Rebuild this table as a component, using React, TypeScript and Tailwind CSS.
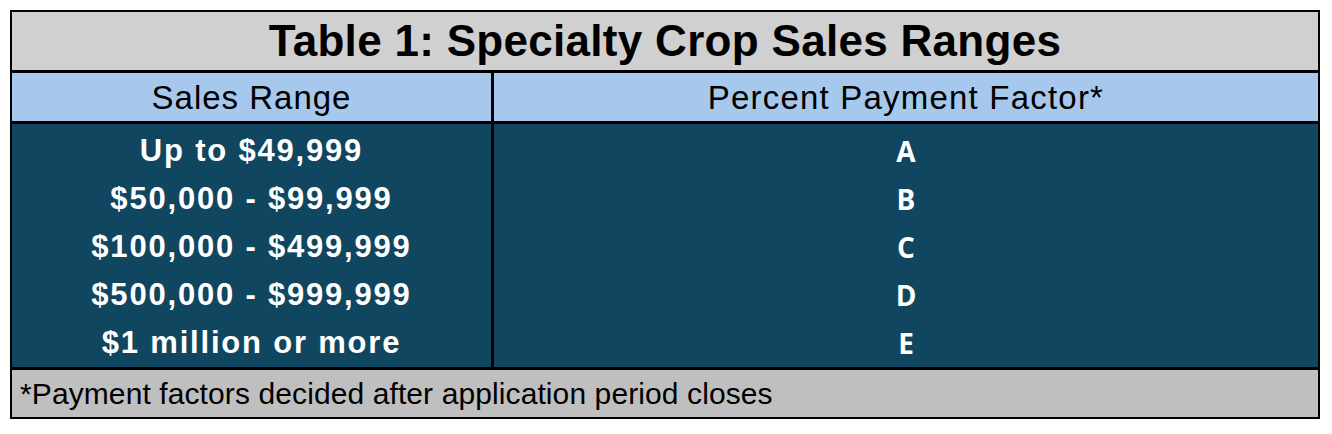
import React from "react";

const rows: [string, string][] = [
  ["Up to $49,999", "A"],
  ["$50,000 - $99,999", "B"],
  ["$100,000 - $499,999", "C"],
  ["$500,000 - $999,999", "D"],
  ["$1 million or more", "E"],
];

export default function App() {
  return (
    <div className="w-[1332px] h-[434px] bg-white pt-[10px] pl-[10px]">
      <div className="w-[1310px] border-2 border-black font-['Liberation_Sans',Arial,sans-serif]">
        <div className="h-[61px] bg-[#d0d0d0] border-b-[3px] border-black flex items-center justify-center">
          <h1 className="text-[44px] font-bold text-black leading-none tracking-[0.3px]">Table 1: Specialty Crop Sales Ranges</h1>
        </div>
        <div className="grid grid-cols-[482px_1fr] bg-[#a6c8ec] border-b-[3px] border-black h-[51px]">
          <div className="flex items-center justify-center border-r-[3px] border-black text-[33px] tracking-[1px] text-black">Sales Range</div>
          <div className="flex items-center justify-center text-[33px] tracking-[1.2px] text-black">Percent Payment Factor*</div>
        </div>
        <div className="grid grid-cols-[482px_1fr] bg-[#10465f] border-b-[3px] border-black">
          <div className="border-r-[3px] border-black pt-[3px]">
            {rows.map(([range]) => (
              <div key={range} className="h-[48px] flex items-center justify-center text-white font-bold text-[31px] tracking-[1.8px]">
                {range}
              </div>
            ))}
          </div>
          <div className="pt-[3px]">
            {rows.map(([range, f]) => (
              <div key={range} className="h-[48px] flex items-center justify-center text-white font-bold text-[28px] font-['Open_Sans',sans-serif]">
                {f}
              </div>
            ))}
          </div>
        </div>
        <div className="h-[47px] bg-[#bfbfbf] flex items-center pl-[8px] text-[30px] tracking-[0.1px] text-black">
          *Payment factors decided after application period closes
        </div>
      </div>
    </div>
  );
}
